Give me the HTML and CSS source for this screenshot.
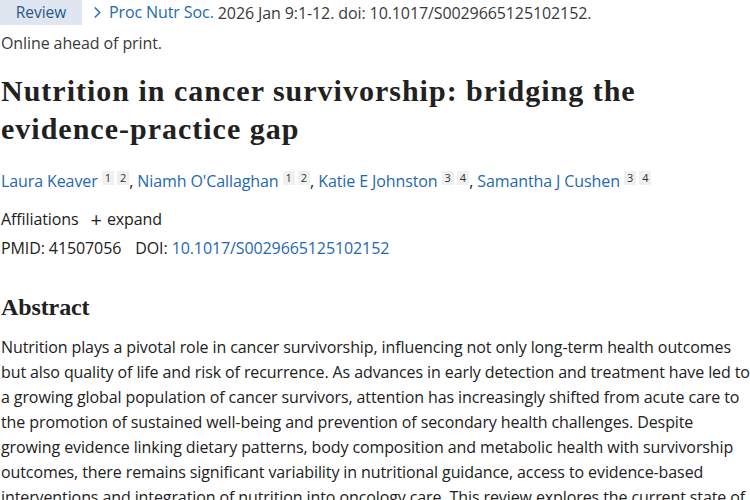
FILE: index.html
```html
<!DOCTYPE html>
<html lang="en">
<head>
<meta charset="utf-8">
<title>Nutrition in cancer survivorship</title>
<link rel="stylesheet" href="styles.css">
</head>
<body>
<main class="article">
  <div class="cit-row">
    <span class="badge">Review</span>
    <span class="cit">
      <a class="journal" href="#"><svg class="chev" viewBox="0 0 10 14" width="9" height="13"><path d="M2 1.5 L7.5 7 L2 12.5" fill="none" stroke="currentColor" stroke-width="1.6"/></svg>Proc Nutr Soc.</a>
      2026 Jan 9:1-12. doi: 10.1017/S0029665125102152.
    </span>
  </div>
  <div class="status">Online ahead of print.</div>

  <h1 class="title">Nutrition in cancer survivorship: bridging the evidence-practice gap</h1>

  <div class="authors">
    <a href="#">Laura Keaver</a><sup class="aff"><span>1</span><span>2</span></sup>,
    <a href="#">Niamh O'Callaghan</a><sup class="aff"><span>1</span><span>2</span></sup>,
    <a href="#">Katie E Johnston</a><sup class="aff"><span>3</span><span>4</span></sup>,
    <a href="#">Samantha J Cushen</a><sup class="aff"><span>3</span><span>4</span></sup>
  </div>

  <div class="affil">Affiliations <span class="expand"><span class="plus">+</span>expand</span></div>
  <div class="ids"><span class="pmid">PMID: 41507056</span><span>DOI: <a href="#">10.1017/S0029665125102152</a></span></div>

  <h2 class="abs-title">Abstract</h2>
  <p class="abs">Nutrition plays a pivotal role in cancer survivorship, influencing not only long-term health outcomes<br>
but also quality of life and risk of recurrence. As advances in early detection and treatment have led to<br>
a growing global population of cancer survivors, attention has increasingly shifted from acute care to<br>
the promotion of sustained well-being and prevention of secondary health challenges. Despite<br>
growing evidence linking dietary patterns, body composition and metabolic health with survivorship<br>
outcomes, there remains significant variability in nutritional guidance, access to evidence-based<br>
interventions and integration of nutrition into oncology care. This review explores the current state of<br>
the evidence.</p>
</main>
</body>
</html>
```

FILE: styles.css
```css
html, body {
  margin: 0;
  padding: 0;
  background: #fff;
  overflow: hidden;
}
body {
  font-family: "Open Sans", "Noto Sans", sans-serif;
  font-size: 16px;
  letter-spacing: -0.1px;
  color: #212121;
}
a {
  color: #2369b0;
  text-decoration: none;
}
.article {
  padding: 0 0 0 1px;
  width: 749px;
}
.cit-row {
  display: flex;
  align-items: center;
  height: 25px;
}
.badge {
  background: #dfe6ef;
  color: #265a8a;
  padding: 0 14px;
  margin-left: -1px;
  height: 25px;
  line-height: 25px;
  width: 54px;
  text-align: center;
  font-size: 15.5px;
  letter-spacing: 0;
}
.cit {
  margin-left: 11px;
  color: #3a3a3a;
}
.journal {
  display: inline-flex;
  align-items: center;
  gap: 7px;
}
.chev {
  display: block;
}
.status {
  margin-top: 6px;
  line-height: 24px;
  color: #3a3a3a;
}
.title {
  font-family: "Liberation Serif", serif;
  font-weight: 700;
  font-size: 30px;
  letter-spacing: 1px;
  line-height: 38px;
  color: #212121;
  margin: 17px 0 0 0;
  width: 700px;
}
.authors {
  margin-top: 21px;
  line-height: 24px;
}
.aff {
  display: inline-flex;
  gap: 3px;
  margin-left: 4px;
  vertical-align: 5px;
  font-size: 11px;
  line-height: 14px;
  letter-spacing: 0;
}
.aff span {
  background: #f0f0f0;
  color: #333;
  padding: 0 3px;
}
.affil {
  margin-top: 14px;
  line-height: 24px;
}
.expand {
  margin-left: 8px;
}
.plus {
  font-size: 20px;
  margin-right: 5px;
  vertical-align: -2px;
}
.ids {
  line-height: 24px;
  margin-top: 4px;
}
.pmid {
  margin-right: 14px;
}
.abs-title {
  font-family: "Liberation Serif", serif;
  font-weight: 700;
  font-size: 24px;
  line-height: 30px;
  margin: 32px 0 0 0;
}
.abs {
  margin: 13px 0 0 0;
  line-height: 25px;
  white-space: nowrap;
}
```
